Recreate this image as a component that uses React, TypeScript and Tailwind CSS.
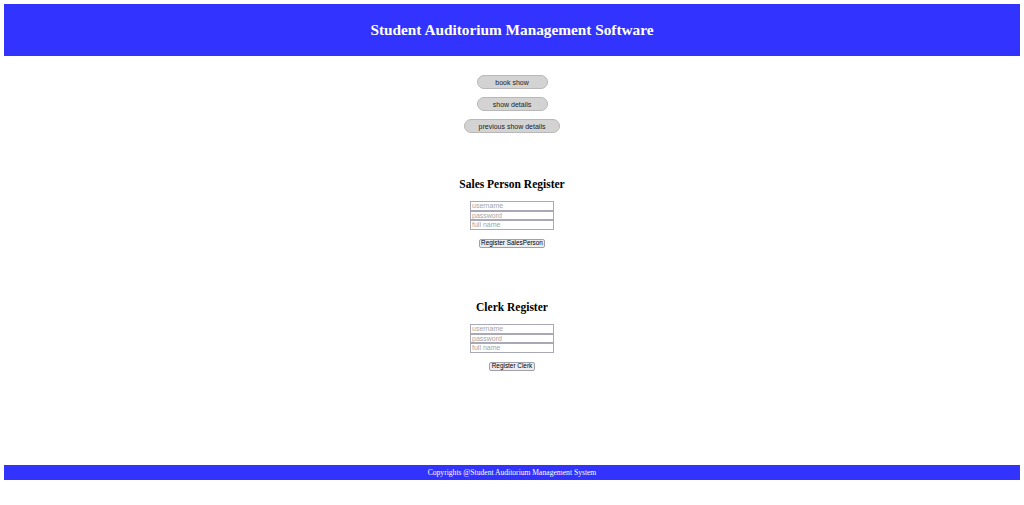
const navButtons = ["book show", "show details", "previous show details"];

const RegisterForm = ({ title, action }: { title: string; action: string }) => (
  <div className="flex flex-col items-center">
    <h2 className="text-[11.5px] font-bold leading-[16px] text-black [font-family:'Liberation_Serif',serif]">{title}</h2>
    <div className="mt-[9px] flex flex-col">
      {["username", "password", "full name"].map((p) => (
        <input
          key={p}
          placeholder={p}
          className="h-[9.5px] w-[84px] border border-[#a9a9b5] bg-white px-[1px] text-[7px] leading-none placeholder:text-[#a5a5a5] [font-family:'Liberation_Sans',sans-serif] outline-none"
        />
      ))}
    </div>
    <button className="mt-[9px] h-[9.5px] rounded-[2px] border border-[#a0a0aa] bg-[#ececef] px-[1.5px] text-[6.4px] leading-none text-black [font-family:'Liberation_Sans',sans-serif]">
      {action}
    </button>
  </div>
);

export default function App() {
  return (
    <div className="min-h-[505px] bg-white px-[4px] pt-[4px]">
      <header className="flex h-[52px] items-center justify-center bg-[#3333ff]">
        <h1 className="text-[15.3px] font-bold text-white [font-family:'Liberation_Serif',serif]">
          Student Auditorium Management Software
        </h1>
      </header>

      <div className="mt-[19px] flex flex-col items-center gap-[8px]">
        {navButtons.map((b) => (
          <button
            key={b}
            className={`h-[14px] ${b.length > 14 ? "w-[96px]" : "w-[71px]"} rounded-full border border-[#b8b8b8] bg-[#d3d3d3] text-[7px] leading-none text-[#222] [font-family:'Liberation_Sans',sans-serif]`}
          >
            {b}
          </button>
        ))}
      </div>

      <div className="mt-[43px]">
        <RegisterForm title="Sales Person Register" action="Register SalesPerson" />
      </div>
      <div className="mt-[51px]">
        <RegisterForm title="Clerk Register" action="Register Clerk" />
      </div>

      <footer className="mt-[94px] flex h-[15px] items-center justify-center bg-[#3333ff]">
        <p className="text-[7.6px] text-white [font-family:'Liberation_Serif',serif]">
          Copyrights @Student Auditorium Management System
        </p>
      </footer>
    </div>
  );
}
